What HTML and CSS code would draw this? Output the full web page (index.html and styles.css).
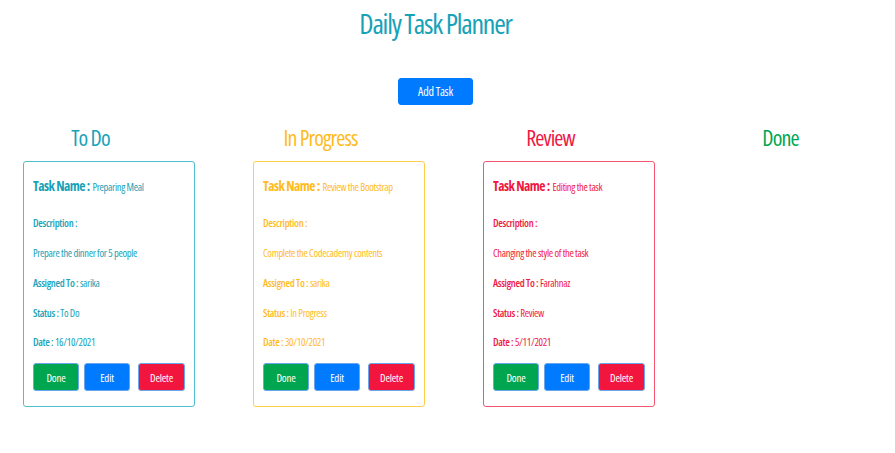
FILE: index.html
```html
<!DOCTYPE html>
<html lang="en">
<head>
<meta charset="utf-8">
<title>Daily Task Planner</title>
<link rel="stylesheet" href="styles.css">
</head>
<body>
<header class="top">
  <h1 class="title">Daily Task Planner</h1>
  <button class="btn btn-add">Add Task</button>
</header>
<main class="board">
  <section class="col todo">
    <h2 class="col-title">To Do</h2>
    <div class="card">
      <p class="row row-name"><b class="name-label">Task Name :</b> Preparing Meal</p>
      <p class="row row-desc"><b>Description :</b></p>
      <p class="row">Prepare the dinner for 5 people</p>
      <p class="row"><b>Assigned To :</b> sarika</p>
      <p class="row"><b>Status :</b> To Do</p>
      <p class="row row-date"><b>Date :</b> 16/10/2021</p>
      <div class="actions">
        <button class="btn btn-done">Done</button>
        <button class="btn btn-edit">Edit</button>
        <button class="btn btn-delete">Delete</button>
      </div>
    </div>
  </section>
  <section class="col progress">
    <h2 class="col-title">In Progress</h2>
    <div class="card">
      <p class="row row-name"><b class="name-label">Task Name :</b> Review the Bootstrap</p>
      <p class="row row-desc"><b>Description :</b></p>
      <p class="row">Complete the Codecademy contents</p>
      <p class="row"><b>Assigned To :</b> sarika</p>
      <p class="row"><b>Status :</b> In Progress</p>
      <p class="row row-date"><b>Date :</b> 30/10/2021</p>
      <div class="actions">
        <button class="btn btn-done">Done</button>
        <button class="btn btn-edit">Edit</button>
        <button class="btn btn-delete">Delete</button>
      </div>
    </div>
  </section>
  <section class="col review">
    <h2 class="col-title">Review</h2>
    <div class="card">
      <p class="row row-name"><b class="name-label">Task Name :</b> Editing the task</p>
      <p class="row row-desc"><b>Description :</b></p>
      <p class="row">Changing the style of the task</p>
      <p class="row"><b>Assigned To :</b> Farahnaz</p>
      <p class="row"><b>Status :</b> Review</p>
      <p class="row row-date"><b>Date :</b> 5/11/2021</p>
      <div class="actions">
        <button class="btn btn-done">Done</button>
        <button class="btn btn-edit">Edit</button>
        <button class="btn btn-delete">Delete</button>
      </div>
    </div>
  </section>
  <section class="col done">
    <h2 class="col-title">Done</h2>
  </section>
</main>
</body>
</html>
```
FILE: styles.css
```css
* { box-sizing: border-box; }

body {
  margin: 0;
  background: #fff;
  font-family: "Open Sans", "Noto Sans", sans-serif;
  font-stretch: 75%;
  letter-spacing: -0.02em;
}

.top {
  display: flex;
  flex-direction: column;
  align-items: center;
  padding-right: 24px;
}

.title {
  margin: 5px 0 0;
  font-size: 28px;
  line-height: 36px;
  font-weight: 500;
  letter-spacing: -0.045em;
  color: #17a2b8;
}

.btn {
  font-family: inherit;
  font-stretch: 75%;
  letter-spacing: -0.02em;
  color: #fff;
  border: 1px solid #6aa6ee;
  border-radius: 3px;
  cursor: pointer;
  padding: 0;
}

.btn-add {
  margin-top: 37px;
  width: 75px;
  height: 27px;
  font-size: 12px;
  background: #007bff;
  border-color: #007bff;
}

.board {
  display: flex;
  gap: 58px;
  padding-left: 23px;
  margin-top: 18px;
}

.col {
  width: 172px;
  flex: none;
}

.col-title {
  margin: 0 0 10px;
  padding-right: 37px;
  text-align: center;
  font-size: 22px;
  line-height: 28px;
  font-weight: 500;
  letter-spacing: -0.04em;
}

.card {
  border: 1px solid;
  border-radius: 3px;
  padding: 16px 8px 15px 9px;
}

.row {
  margin: 14px 0 0;
  font-size: 10.5px;
  line-height: 16px;
  font-weight: 400;
  white-space: nowrap;
}

.row b { font-weight: 600; }

.row-name { margin-top: 0; font-size: 10.5px; }
.row-name .name-label { font-size: 13.5px; font-weight: 700; letter-spacing: -0.04em; margin-right: 1px; }
.row-desc { margin-top: 20px; }
.row-date { margin-top: 13px; }

.actions {
  display: flex;
  margin-top: 13px;
}

.actions .btn {
  height: 28px;
  font-size: 11px;
}

.btn-done { width: 46px; background: #00a54f; }
.btn-edit { width: 46px; margin-left: 5px; background: #007bff; }
.btn-delete { width: 47px; margin-left: 8px; background: #f2163e; }

.todo { color: #17a2b8; }
.todo .card { border-color: #4fbfd0; }

.progress { color: #ffbb1c; }
.progress .card { border-color: #ffcf4a; }

.review { color: #f0173f; }
.review .card { border-color: #f5556f; }

.done { color: #00a651; }
```
